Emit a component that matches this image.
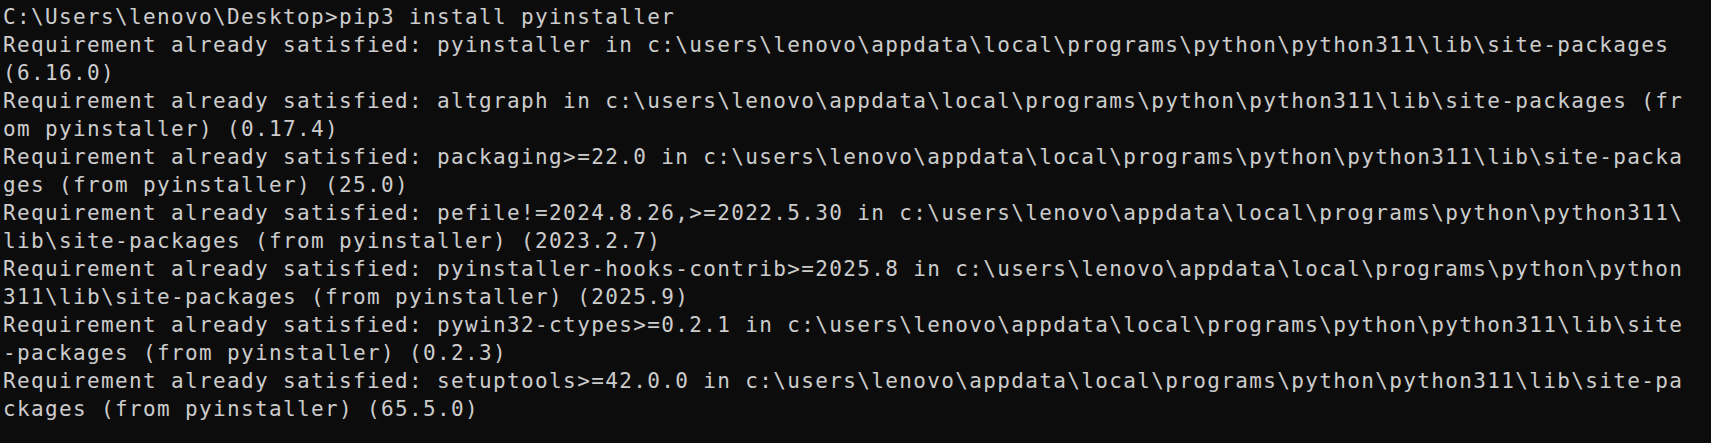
const lines = [
  "C:\\Users\\lenovo\\Desktop>pip3 install pyinstaller",
  "Requirement already satisfied: pyinstaller in c:\\users\\lenovo\\appdata\\local\\programs\\python\\python311\\lib\\site-packages",
  "(6.16.0)",
  "Requirement already satisfied: altgraph in c:\\users\\lenovo\\appdata\\local\\programs\\python\\python311\\lib\\site-packages (fr",
  "om pyinstaller) (0.17.4)",
  "Requirement already satisfied: packaging>=22.0 in c:\\users\\lenovo\\appdata\\local\\programs\\python\\python311\\lib\\site-packa",
  "ges (from pyinstaller) (25.0)",
  "Requirement already satisfied: pefile!=2024.8.26,>=2022.5.30 in c:\\users\\lenovo\\appdata\\local\\programs\\python\\python311\\",
  "lib\\site-packages (from pyinstaller) (2023.2.7)",
  "Requirement already satisfied: pyinstaller-hooks-contrib>=2025.8 in c:\\users\\lenovo\\appdata\\local\\programs\\python\\python",
  "311\\lib\\site-packages (from pyinstaller) (2025.9)",
  "Requirement already satisfied: pywin32-ctypes>=0.2.1 in c:\\users\\lenovo\\appdata\\local\\programs\\python\\python311\\lib\\site",
  "-packages (from pyinstaller) (0.2.3)",
  "Requirement already satisfied: setuptools>=42.0.0 in c:\\users\\lenovo\\appdata\\local\\programs\\python\\python311\\lib\\site-pa",
  "ckages (from pyinstaller) (65.5.0)",
];

export default function App() {
  return (
    <div className="w-[1711px] h-[443px] overflow-hidden bg-[#0c0c0c] text-[#cccccc] pt-[3px] pl-[3px] font-['DejaVu_Sans_Mono',monospace] text-[21px] tracking-[1.36px]">
      {lines.map((line, i) => (
        <div key={i} className="h-[28px] leading-[28px] whitespace-pre">
          {line}
        </div>
      ))}
    </div>
  );
}
